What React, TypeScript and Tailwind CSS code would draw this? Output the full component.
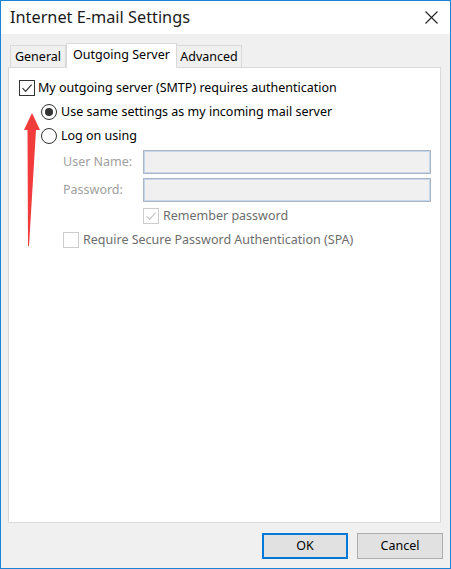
import React from "react";

function CheckBox({ checked, disabled }: { checked?: boolean; disabled?: boolean }) {
  const border = disabled ? "border-[#cccccc]" : "border-[#333333]";
  const stroke = disabled ? "#c4c4c4" : "#333333";
  return (
    <span className={`flex h-[16px] w-[16px] shrink-0 items-center justify-center border bg-white ${border}`}>
      {checked && (
        <svg width="12" height="12" viewBox="0 0 12 12">
          <path d="M1.5 6.2 L4.6 9.3 L10.6 2.6" fill="none" stroke={stroke} strokeWidth="1.2" />
        </svg>
      )}
    </span>
  );
}

function Radio({ checked }: { checked?: boolean }) {
  return (
    <span className="flex h-[16px] w-[16px] shrink-0 items-center justify-center rounded-full border border-[#333333] bg-white">
      {checked && <span className="h-[8px] w-[8px] rounded-full bg-[#333333]" />}
    </span>
  );
}

function Field({ label }: { label: string }) {
  return (
    <div className="flex h-[24px] items-center">
      <span className="w-[80px] text-[#a0a0a0]">{label}</span>
      <div className="h-[24px] w-[288px] border border-[#adb7c4] bg-[#f0f0f0] shadow-[inset_0_0_0_1px_#c3d6ec]" />
    </div>
  );
}

export default function App() {
  return (
    <div className="flex h-[569px] w-[451px] flex-col border border-[#1883d7] bg-[#f0f0f0] font-['Noto_Sans','Open_Sans',sans-serif] text-[12.5px] text-black">
      <div className="flex h-[33px] shrink-0 items-center justify-between bg-white pl-[9px] pr-[12px]">
        <span className="text-[16.3px] text-[#1a1a1a]">Internet E-mail Settings</span>
        <svg width="13" height="13" viewBox="0 0 13 13">
          <path d="M0.5 0.5 L12.5 12.5 M12.5 0.5 L0.5 12.5" stroke="#222" strokeWidth="1.1" />
        </svg>
      </div>

      <div className="ml-[7px] mt-[9px] flex items-end pl-[2px]">
        <div className="flex h-[22px] w-[56px] items-center justify-center border border-b-0 border-[#d9d9d9] bg-[#f0f0f0] pt-[2px]">
          General
        </div>
        <div className="relative z-10 -mb-px flex h-[25px] w-[111px] items-center justify-center border border-b-0 border-[#d9d9d9] bg-white pb-[2px]">
          Outgoing Server
        </div>
        <div className="flex h-[22px] w-[65px] items-center justify-center border border-b-0 border-l-0 border-[#d9d9d9] bg-[#f0f0f0] pt-[2px]">
          Advanced
        </div>
      </div>

      <div className="relative ml-[7px] h-[456px] w-[433px] border border-[#d9d9d9] bg-white pl-[10px] pt-[12px]">
        <div className="flex h-[16px] items-center gap-[3px]">
          <CheckBox checked />
          <span>My outgoing server (SMTP) requires authentication</span>
        </div>
        <div className="ml-[22px] mt-[8px] flex flex-col gap-[8px]">
          <div className="flex h-[16px] items-center gap-[4px]">
            <Radio checked />
            <span>Use same settings as my incoming mail server</span>
          </div>
          <div className="flex h-[16px] items-center gap-[4px]">
            <Radio />
            <span>Log on using</span>
          </div>
        </div>
        <div className="ml-[44px] mt-[6px] flex flex-col gap-[4px]">
          <Field label="User Name:" />
          <Field label="Password:" />
          <div className="ml-[80px] mt-[2px] flex h-[16px] items-center gap-[4px]">
            <CheckBox checked disabled />
            <span className="text-[#6d6d6d]">Remember password</span>
          </div>
          <div className="mt-[4px] flex h-[16px] items-center gap-[4px]">
            <CheckBox disabled />
            <span className="text-[#6d6d6d]">Require Secure Password Authentication (SPA)</span>
          </div>
        </div>

        <svg className="pointer-events-none absolute left-0 top-0" width="60" height="200" viewBox="0 0 60 200">
          <polygon
            points="23,45 31,62 27,62 20,178 19,178 18.5,62 15,62"
            fill="#f23b3b"
          />
        </svg>
      </div>

      <div className="mt-[10px] flex justify-end gap-[9px] pr-[7px]">
        <button className="h-[26px] w-[86px] border-2 border-[#0078d7] bg-[#e1e1e1] text-[12.5px]">OK</button>
        <button className="h-[26px] w-[86px] border border-[#adadad] bg-[#e1e1e1] text-[12.5px]">Cancel</button>
      </div>
    </div>
  );
}
